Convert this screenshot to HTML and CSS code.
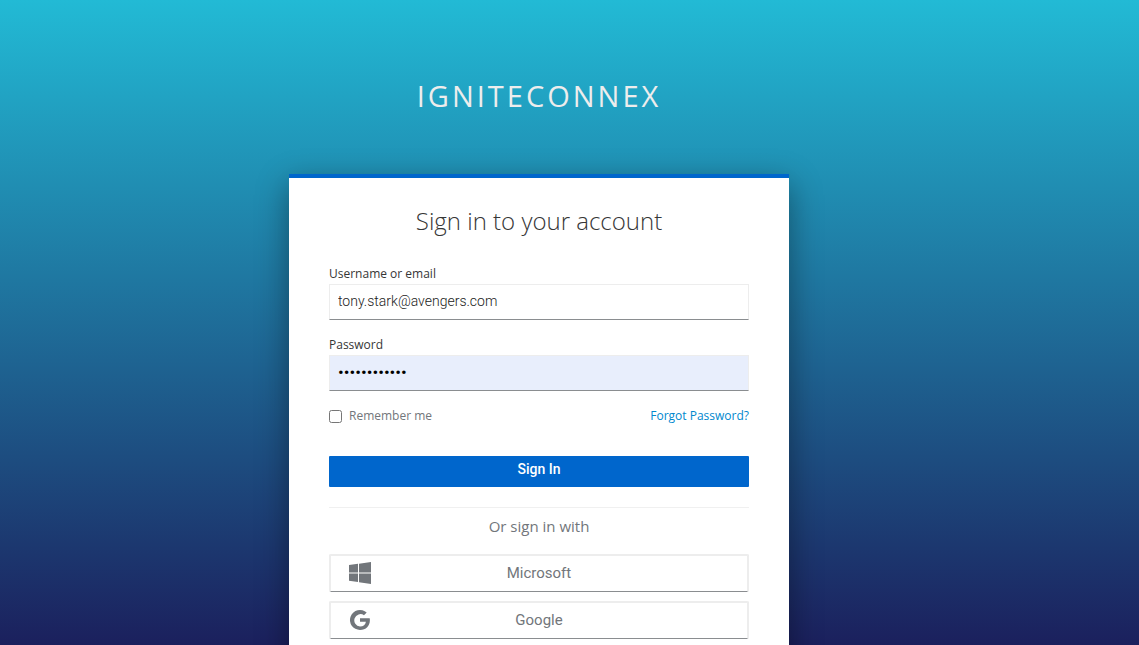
FILE: index.html
```html
<!DOCTYPE html>
<html lang="en">
<head>
<meta charset="utf-8">
<meta name="viewport" content="width=device-width, initial-scale=1">
<title>Sign in to IgniteConnex</title>
<link rel="stylesheet" href="styles.css">
</head>
<body>
<div class="page">
  <header class="brand">IgniteConnex</header>
  <main class="card">
    <h1 class="card-title">Sign in to your account</h1>
    <form class="form">
      <div class="field">
        <label class="label" for="username">Username or email</label>
        <input class="input" id="username" type="text" value="tony.stark@avengers.com">
      </div>
      <div class="field">
        <label class="label" for="password">Password</label>
        <input class="input input-filled" id="password" type="password" value="ironman12345">
      </div>
      <div class="options">
        <label class="remember" for="remember"><input class="checkbox" id="remember" type="checkbox">Remember me</label>
        <a class="link" href="#forgot">Forgot Password?</a>
      </div>
      <button class="submit" type="submit">Sign In</button>
    </form>
    <section class="social">
      <h2 class="social-title">Or sign in with</h2>
      <button class="provider" type="button">
        <svg class="provider-icon" viewBox="0 0 22 22" aria-hidden="true"><path d="M0 3.100 9 1.850V10.400H0zM10 1.700 22 0V10.400H10zM0 11.400H9V20.050L0 18.800zM10 11.400H22V22L10 20.200z"/></svg>
        <span class="provider-name">Microsoft</span>
      </button>
      <button class="provider" type="button">
        <svg class="provider-icon" viewBox="0 0 22 22" aria-hidden="true"><path d="M11 9.200H20.700C20.800 9.800 20.900 10.300 20.900 11C20.900 17 17 21 11 21A10 10 0 1 1 17.700 3.600L15 6.200A6.200 6.200 0 1 0 11 17.500C14.400 17.500 16.500 15.500 16.900 12.700H11z"/></svg>
        <span class="provider-name">Google</span>
      </button>
    </section>
  </main>
</div>
</body>
</html>
```
FILE: styles.css
```css
* {
  box-sizing: border-box;
}

body {
  margin: 0;
  height: 100vh;
  overflow: hidden;
  background: linear-gradient(#22bad5, #1b205d);
  font-family: "Open Sans", sans-serif;
  color: #363636;
}

.page {
  display: flex;
  flex-direction: column;
  align-items: center;
  min-height: 100vh;
  padding-right: 61px;
}

.brand {
  padding: 76px 20px 58px;
  color: #ededed;
  font-size: 29px;
  line-height: 40px;
  letter-spacing: 3px;
  text-transform: uppercase;
}

.card {
  flex: 1 0 auto;
  width: 100%;
  max-width: 500px;
  padding: 27px 40px 40px;
  border-top: 4px solid #06c;
  background: #fff;
  box-shadow: 0 10px 30px rgba(0, 0, 0, 0.4);
}

.card-title {
  margin: 0 0 28px;
  font-size: 24px;
  font-weight: 300;
  line-height: 31px;
  text-align: center;
}

.form {
  display: flex;
  flex-direction: column;
}

.field {
  display: flex;
  flex-direction: column;
  margin-bottom: 15px;
}

.label {
  font-size: 12px;
  line-height: 20px;
}

.input {
  width: 100%;
  height: 36px;
  padding: 0 8px 2px;
  border: 1px solid #ededed;
  border-bottom-color: #8a8d90;
  border-radius: 0;
  background: #fff;
  color: #222;
  font-family: Roboto, sans-serif;
  font-size: 14px;
  font-weight: 300;
}

.input-filled {
  background: #e8eefc;
  color: #000;
  font-size: 17px;
  font-weight: 400;
}

.options {
  display: flex;
  justify-content: space-between;
  font-size: 12px;
  line-height: 20px;
}

.remember {
  display: flex;
  align-items: center;
  gap: 7px;
  color: #72767b;
}

.checkbox {
  width: 13px;
  height: 13px;
  margin: 0;
}

.link {
  color: #0088ce;
  text-decoration: none;
}

.submit {
  height: 31px;
  margin-top: 30px;
  padding: 0 0 5px;
  border: 0;
  border-radius: 1px;
  background: #06c;
  color: #fff;
  font-family: Roboto, sans-serif;
  font-size: 14px;
  font-weight: 500;
}

.social {
  display: flex;
  flex-direction: column;
  gap: 9px;
  margin-top: 20px;
  border-top: 1px solid #f0f0f0;
}

.social-title {
  margin: 7px 0 8px;
  color: #72767b;
  font-size: 15px;
  font-weight: 400;
  line-height: 22px;
  text-align: center;
}

.provider {
  display: grid;
  grid-template-columns: 22px 1fr 22px;
  align-items: center;
  height: 38px;
  padding: 0 18px 2px;
  border: 2px solid #ededed;
  border-bottom: 1px solid #8a8d90;
  border-radius: 2px;
  background: #fff;
  color: #72767b;
  font-family: Roboto, sans-serif;
  font-size: 15px;
}

.provider-icon {
  width: 22px;
  height: 22px;
  fill: #72767b;
}
```
